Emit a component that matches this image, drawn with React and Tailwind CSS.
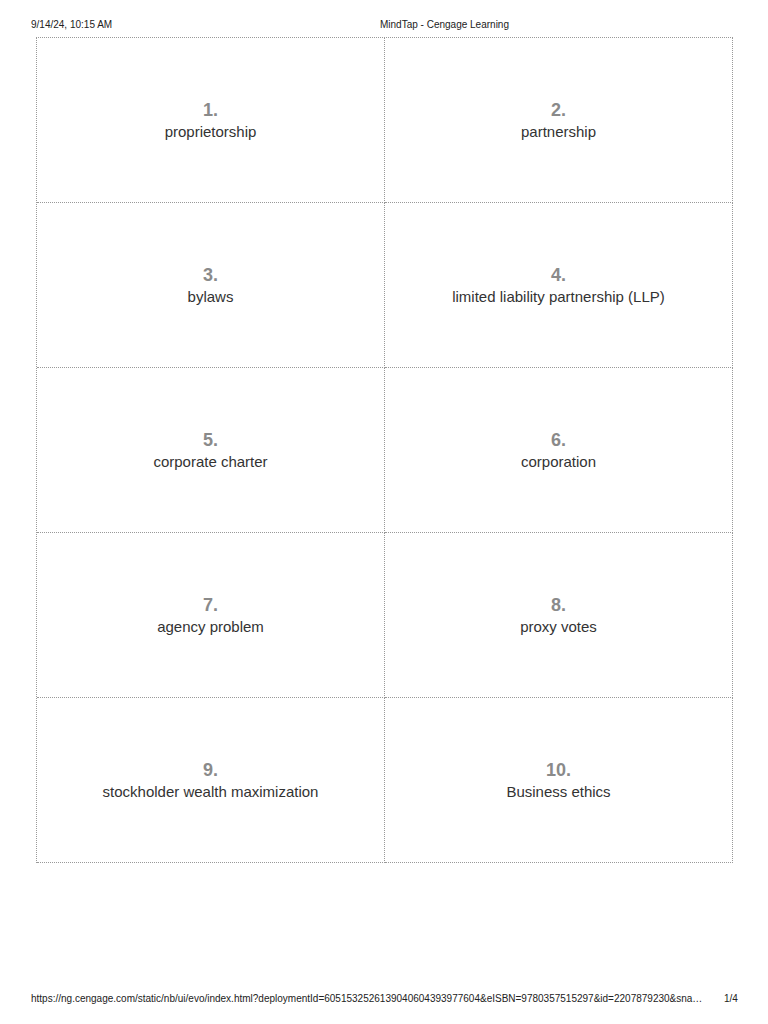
import React from "react";

const items = [
  "proprietorship",
  "partnership",
  "bylaws",
  "limited liability partnership (LLP)",
  "corporate charter",
  "corporation",
  "agency problem",
  "proxy votes",
  "stockholder wealth maximization",
  "Business ethics",
];

export default function App() {
  return (
    <div
      className="w-[768px] h-[1024px] bg-white flex flex-col text-[#222]"
      style={{ fontFamily: '"Liberation Sans", Arial, sans-serif' }}
    >
      <div className="flex h-[37px] items-start pt-[19px] text-[10px] leading-[12px]">
        <div className="pl-[31px] w-[380px]">9/14/24, 10:15 AM</div>
        <div>MindTap - Cengage Learning</div>
      </div>
      <div className="ml-[36px] w-[697px] grid grid-cols-2 border-t border-l border-dotted border-[#999]">
        {items.map((t, i) => (
          <div
            key={i}
            className="h-[165px] border-r border-b border-dotted border-[#999] flex flex-col items-center justify-center pt-[2px]"
          >
            <div className="text-[18px] leading-[21px] font-bold text-[#8a8a8a]">{i + 1}.</div>
            <div className="text-[15px] leading-[21px] text-[#333]">{t}</div>
          </div>
        ))}
      </div>
      <div className="mt-auto flex items-center h-[20px] mb-[15px] text-[10px] leading-[12px]">
        <div className="pl-[31px] w-[724px] whitespace-nowrap overflow-hidden">
          https://ng.cengage.com/static/nb/ui/evo/index.html?deploymentId=6051532526139040604393977604&eISBN=9780357515297&id=2207879230&sna…
        </div>
        <div>1/4</div>
      </div>
    </div>
  );
}
